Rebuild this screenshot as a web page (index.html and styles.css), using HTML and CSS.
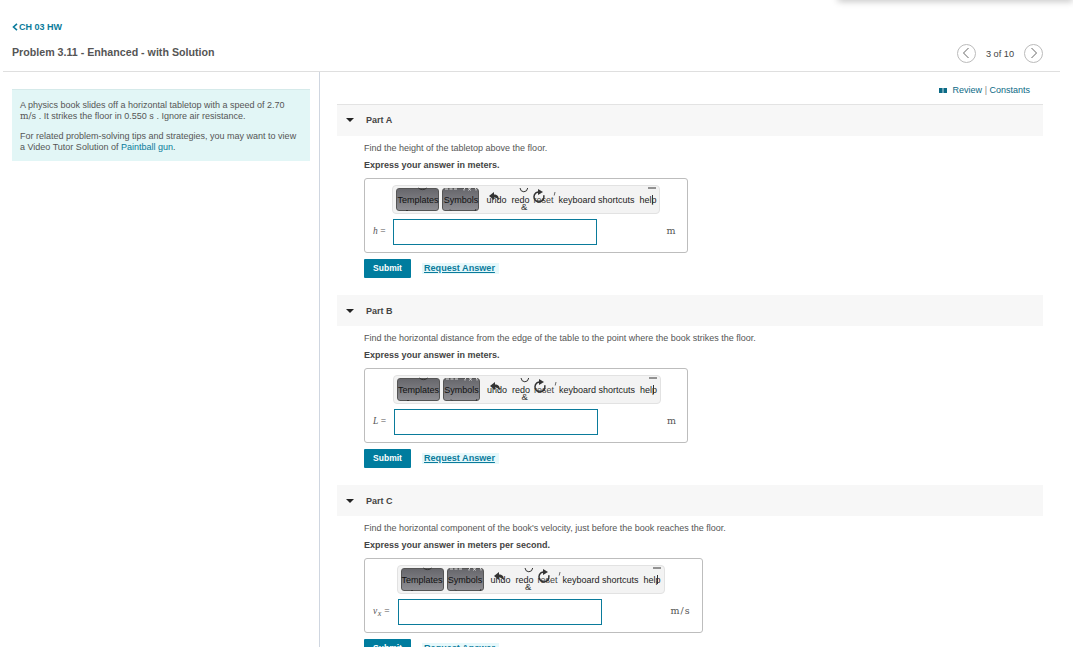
FILE: index.html
```html
<!DOCTYPE html>
<html lang="en">
<head>
<meta charset="utf-8">
<title>Problem 3.11</title>
<link rel="stylesheet" href="styles.css">
</head>
<body>
<svg class="defs" width="0" height="0" aria-hidden="true">
  <symbol id="tb-marks" viewBox="0 0 268 29">
    <path d="M26.500 3a4.500 3 0 0 0 8 0" fill="none" stroke="#333" stroke-width="1"/>
    <path d="M53 4h3M57.500 4h3M62 4h3M73 3q-1.500 1 -1 2.500M83 3q1.500 1 1 2.500M76.500 3l2 2.500M78.500 3l-2 2.500" fill="none" stroke="#ddd" stroke-width="1"/>
    <path d="M14 25.500h2M58 24.500l1 1M84 24l-1 2" fill="none" stroke="#333" stroke-width="1"/>
    <path d="M97 11l5-4v2.500c3 0 5 1.500 5 6-1.500-2-2.500-3-5-3v2.500z" fill="#333"/>
    <path d="M128 3a3.900 4.500 0 0 0 7.700 0" fill="none" stroke="#333" stroke-width="1"/>
    <path d="M151.700 10.300A5 5 0 1 1 148 7" fill="none" stroke="#333" stroke-width="1.500"/>
    <path d="M146 4l5 3-5 3z" fill="#333"/>
    <path d="M163 7l-.8 3.500" fill="none" stroke="#444" stroke-width=".8"/>
    <path d="M256 3h8" fill="none" stroke="#333" stroke-width="1"/>
    <path d="M260.500 10v9" fill="none" stroke="#333" stroke-width="1"/>
  </symbol>
  <symbol id="chev-l" viewBox="0 0 12 12"><path d="M8.500 1L3.500 6l5 5" fill="none" stroke="currentColor" stroke-width="1"/></symbol>
  <symbol id="chev-r" viewBox="0 0 12 12"><path d="M3.500 1l5 5-5 5" fill="none" stroke="currentColor" stroke-width="1"/></symbol>
</svg>

<header class="top">
  <a class="crumb" href="#"><svg class="crumb-chev" viewBox="0 0 6 8"><path d="M5 .8L1.500 4 5 7.200" fill="none" stroke="currentColor" stroke-width="1.600"/></svg>CH 03 HW</a>
  <div class="title-row">
    <h1 class="title">Problem 3.11 - Enhanced - with Solution</h1>
    <nav class="pager">
      <span class="circle"><svg class="chev"><use href="#chev-l"/></svg></span>
      <span class="count">3 of 10</span>
      <span class="circle"><svg class="chev"><use href="#chev-r"/></svg></span>
    </nav>
  </div>
</header>

<div class="main">
  <aside class="side">
    <div class="intro">
      <p>A physics book slides off a horizontal tabletop with a speed of 2.70 <span class="math">m/s</span> . It strikes the floor in 0.550 <span class="math">s</span> . Ignore air resistance.</p>
      <p>For related problem-solving tips and strategies, you may want to view a Video Tutor Solution of <a href="#">Paintball gun</a>.</p>
    </div>
  </aside>

  <main class="content">
    <div class="review">
      <svg class="book" viewBox="0 0 8 5"><path d="M0 0h3.600v5H0zM4.400 0H8v5H4.400z" fill="#0b6a86"/></svg>
      <a href="#">Review</a> <span class="sep">|</span> <a href="#">Constants</a>
    </div>

    <section class="part part-first">
      <div class="part-head"><span class="tri"></span>Part A</div>
      <div class="part-body">
        <p class="ask">Find the height of the tabletop above the floor.</p>
        <p class="express">Express your answer in meters.</p>
        <div class="answer">
          <div class="toolbar">
            <span class="tb-btn tb-t">Templates</span><span class="tb-btn tb-s">Symbols</span>
            <span class="tb-link tb-undo">undo</span><span class="tb-link tb-redo">redo</span><span class="tb-link tb-reset">reset</span><span class="tb-link tb-keys">keyboard shortcuts</span><span class="tb-link tb-help">help</span>
            <svg class="tb-marks"><use href="#tb-marks"/></svg><span class="amp">&amp;</span>
          </div>
          <span class="var"><i>h</i> =</span>
          <input class="field" type="text" aria-label="h">
          <span class="unit">m</span>
        </div>
        <div class="actions"><button class="submit">Submit</button><a class="request" href="#">Request Answer</a></div>
      </div>
    </section>

    <section class="part">
      <div class="part-head"><span class="tri"></span>Part B</div>
      <div class="part-body">
        <p class="ask">Find the horizontal distance from the edge of the table to the point where the book strikes the floor.</p>
        <p class="express">Express your answer in meters.</p>
        <div class="answer">
          <div class="toolbar">
            <span class="tb-btn tb-t">Templates</span><span class="tb-btn tb-s">Symbols</span>
            <span class="tb-link tb-undo">undo</span><span class="tb-link tb-redo">redo</span><span class="tb-link tb-reset">reset</span><span class="tb-link tb-keys">keyboard shortcuts</span><span class="tb-link tb-help">help</span>
            <svg class="tb-marks"><use href="#tb-marks"/></svg><span class="amp">&amp;</span>
          </div>
          <span class="var"><i>L</i> =</span>
          <input class="field" type="text" aria-label="L">
          <span class="unit">m</span>
        </div>
        <div class="actions"><button class="submit">Submit</button><a class="request" href="#">Request Answer</a></div>
      </div>
    </section>

    <section class="part">
      <div class="part-head"><span class="tri"></span>Part C</div>
      <div class="part-body">
        <p class="ask">Find the horizontal component of the book's velocity, just before the book reaches the floor.</p>
        <p class="express">Express your answer in meters per second.</p>
        <div class="answer">
          <div class="toolbar">
            <span class="tb-btn tb-t">Templates</span><span class="tb-btn tb-s">Symbols</span>
            <span class="tb-link tb-undo">undo</span><span class="tb-link tb-redo">redo</span><span class="tb-link tb-reset">reset</span><span class="tb-link tb-keys">keyboard shortcuts</span><span class="tb-link tb-help">help</span>
            <svg class="tb-marks"><use href="#tb-marks"/></svg><span class="amp">&amp;</span>
          </div>
          <span class="var"><i>v<sub>x</sub></i> =</span>
          <input class="field" type="text" aria-label="vx">
          <span class="unit unit-wide">m/s</span>
        </div>
        <div class="actions"><button class="submit">Submit</button><a class="request" href="#">Request Answer</a></div>
      </div>
    </section>
  </main>
</div>
<div class="top-shadow"></div>
</body>
</html>
```

FILE: styles.css
```css
* { box-sizing: border-box; }
html, body { height: 647px; overflow: hidden; }
body { margin: 0; background: #fff; color: #444; font-family: "Liberation Sans", Arial, sans-serif; font-size: 9px; position: relative; }
p { margin: 0; }
a { color: #0a7b9b; text-decoration: none; }
.defs { position: absolute; }

.top { margin: 0 13px 0 3px; height: 72px; border-bottom: 1px solid #dfdfdf; padding: 21px 17px 0 9px; }
.crumb { display: flex; align-items: center; height: 12px; font-size: 9px; font-weight: 700; line-height: 12px; }
.crumb-chev { width: 6px; height: 8px; margin-right: 1px; }
.title-row { display: flex; justify-content: space-between; align-items: center; height: 20px; margin-top: 10px; }
.title { margin: 0; padding-bottom: 2px; font-size: 10.660px; font-weight: 700; color: #555; }
.pager { display: flex; align-items: center; gap: 10px; color: #444; }
.circle { width: 19px; height: 19px; border: 1px solid #bbb; border-radius: 50%; display: flex; align-items: center; justify-content: center; color: #666; }
.chev { width: 12px; height: 12px; }
.count { font-size: 9.200px; padding-top: 1px; }

.main { display: flex; height: 575px; }
.side { width: 320px; flex: none; border-right: 1px solid #cfd6e0; padding: 17px 9px 0 12px; }
.intro { background: #e2f6f6; border-top: 1px solid #d5eaea; height: 72px; padding: 9.500px 8px 0; font-size: 9px; line-height: 11.500px; color: #555; }
.intro p + p { margin-top: 8px; }
.intro .math { font-family: "DejaVu Serif", serif; font-size: 9px; }

.content { flex: 1; padding: 12px 30px 0 17px; }
.review { display: flex; justify-content: flex-end; align-items: center; gap: 2.500px; height: 12px; padding-right: 13px; font-size: 9px; margin-bottom: 9px; color: #0b6a86; }
.review a { color: #0b6a86; }
.book { width: 8px; height: 5px; margin-right: 3px; }
.sep { color: #888; }

.part-head { display: flex; align-items: center; height: 31px; background: #f7f7f7; padding-left: 9px; font-size: 9px; font-weight: 700; color: #444; }
.part-first .part-head { border-top: 1px solid #e3e3e3; height: 32px; margin-top: -1px; padding-bottom: 2px; }
.tri { width: 0; height: 0; border-left: 4px solid transparent; border-right: 4px solid transparent; border-top: 4px solid #222; margin-right: 12px; }
.part-body { padding-left: 27px; }
.ask { margin-top: 6px; height: 12px; line-height: 12px; font-size: 9px; color: #555; }
.express { margin-top: 5px; height: 12px; line-height: 12px; font-size: 9px; font-weight: 700; color: #444; }

.answer { display: inline-grid; grid-template-columns: auto 204px auto; align-items: center; border: 1px solid #bdbdbd; border-radius: 3px; margin-top: 7px; padding: 6px 11px 7px 8px; row-gap: 5px; vertical-align: top; }
.toolbar { grid-column: 2 / 4; grid-row: 1; position: relative; width: 268px; height: 29px; margin-left: -1px; background: #f3f3f3; border: 1px solid #e2e2e2; border-radius: 4px; font-size: 9px; color: #222; }
.tb-btn { position: absolute; top: 2px; height: 23px; background: linear-gradient(#67676c, #8d8d92); border: 1px solid #555; border-radius: 3px; line-height: 23px; text-align: center; color: #111; white-space: nowrap; }
.tb-t { left: 3px; width: 43px; }
.tb-s { left: 49px; width: 37px; }
.tb-link { position: absolute; top: 0; line-height: 28px; white-space: nowrap; }
.tb-undo { left: 93px; }
.tb-redo { left: 118px; }
.tb-reset { left: 140px; color: #444; }
.tb-keys { left: 165px; }
.tb-help { left: 246px; }
.tb-marks { position: absolute; left: -1px; top: -1px; width: 268px; height: 29px; }
.amp { position: absolute; left: 127.500px; top: 15px; font-size: 9.500px; line-height: 11px; color: #333; }

.var { grid-column: 1; grid-row: 2; font-family: "Liberation Serif", serif; font-size: 9.500px; color: #555; padding: 0 8px 3px 0; white-space: nowrap; }
.var sub { font-size: 8px; line-height: 0; margin: 0 .5px; }
.field { grid-column: 2; grid-row: 2; width: 204px; height: 26px; border: 1px solid #0a7b9b; background: #fff; margin: 0; padding: 0; }
.unit { grid-column: 3; grid-row: 2; font-family: "DejaVu Serif", serif; font-size: 9.500px; color: #555; margin-left: 69px; padding-bottom: 3px; }
.unit-wide { letter-spacing: 1px; }

.actions { display: flex; align-items: center; margin-top: 6px; margin-bottom: 17px; height: 19px; }
.submit { width: 47px; height: 19px; border: 0; border-radius: 1px; padding: 0 0 2px; background: #007c9e; color: #fff; font: 700 8.500px "Liberation Sans", Arial, sans-serif; }
.request { margin-left: 11px; padding: 0 4px 0 2px; background: #e5f8fb; line-height: 11px; font-size: 9.100px; font-weight: 700; text-decoration: underline; }

.top-shadow { position: absolute; left: 838px; right: 0; top: -6px; height: 6px; box-shadow: 0 1px 7px rgba(0,0,0,.28); }
```
